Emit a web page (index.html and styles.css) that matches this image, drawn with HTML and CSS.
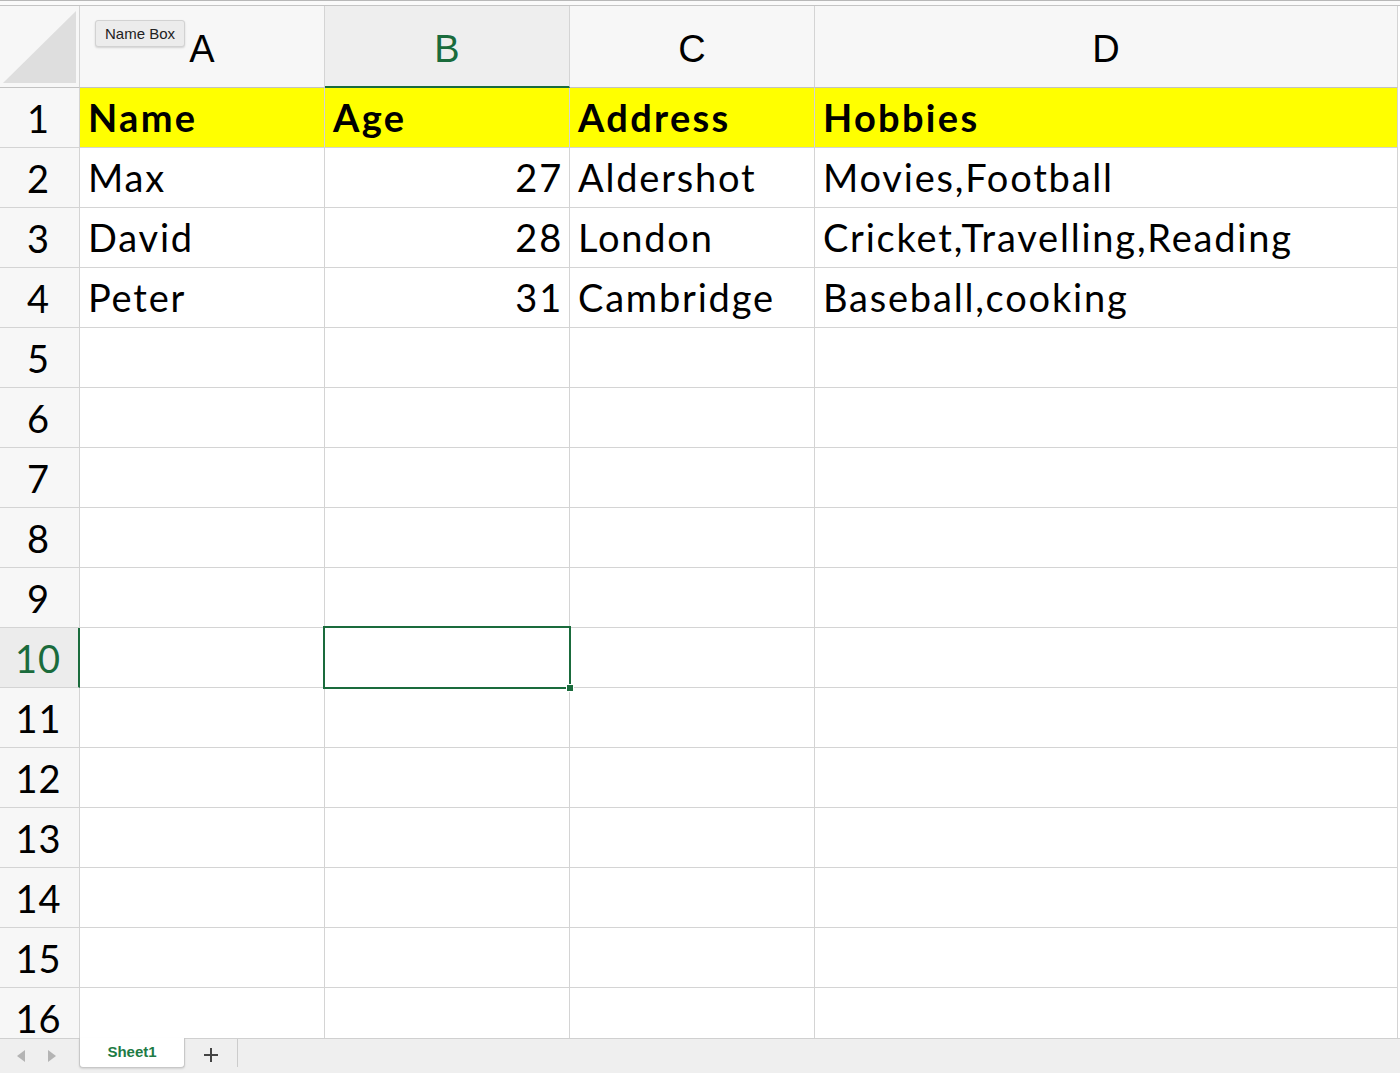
FILE: index.html
```html
<!DOCTYPE html>
<html lang="en">
<head>
  <meta charset="UTF-8">
  <title>Sheet1</title>
  <link rel="stylesheet" href="styles.css">
</head>
<body>

  <div class="topbar"></div>

  <div class="viewport">
    <div class="sheet">
      <div class="corner"><div class="tri"></div></div>
      <div class="colhead">A</div>
      <div class="colhead active">B</div>
      <div class="colhead">C</div>
      <div class="colhead">D</div>

      <div class="rowhead">1</div>
      <div class="cell yellow bold">Name</div>
      <div class="cell yellow bold">Age</div>
      <div class="cell yellow bold">Address</div>
      <div class="cell yellow bold">Hobbies</div>

      <div class="rowhead">2</div>
      <div class="cell">Max</div>
      <div class="cell num">27</div>
      <div class="cell">Aldershot</div>
      <div class="cell">Movies,Football</div>

      <div class="rowhead">3</div>
      <div class="cell">David</div>
      <div class="cell num">28</div>
      <div class="cell">London</div>
      <div class="cell">Cricket,Travelling,Reading</div>

      <div class="rowhead">4</div>
      <div class="cell">Peter</div>
      <div class="cell num">31</div>
      <div class="cell">Cambridge</div>
      <div class="cell">Baseball,cooking</div>

      <div class="rowhead">5</div><div class="cell"></div><div class="cell"></div><div class="cell"></div><div class="cell"></div>
      <div class="rowhead">6</div><div class="cell"></div><div class="cell"></div><div class="cell"></div><div class="cell"></div>
      <div class="rowhead">7</div><div class="cell"></div><div class="cell"></div><div class="cell"></div><div class="cell"></div>
      <div class="rowhead">8</div><div class="cell"></div><div class="cell"></div><div class="cell"></div><div class="cell"></div>
      <div class="rowhead">9</div><div class="cell"></div><div class="cell"></div><div class="cell"></div><div class="cell"></div>
      <div class="rowhead active">10</div><div class="cell"></div><div class="cell selected"><span class="handle"></span></div><div class="cell"></div><div class="cell"></div>
      <div class="rowhead">11</div><div class="cell"></div><div class="cell"></div><div class="cell"></div><div class="cell"></div>
      <div class="rowhead">12</div><div class="cell"></div><div class="cell"></div><div class="cell"></div><div class="cell"></div>
      <div class="rowhead">13</div><div class="cell"></div><div class="cell"></div><div class="cell"></div><div class="cell"></div>
      <div class="rowhead">14</div><div class="cell"></div><div class="cell"></div><div class="cell"></div><div class="cell"></div>
      <div class="rowhead">15</div><div class="cell"></div><div class="cell"></div><div class="cell"></div><div class="cell"></div>
      <div class="rowhead">16</div><div class="cell"></div><div class="cell"></div><div class="cell"></div><div class="cell"></div>
    </div>

    <div class="namebox-tip">Name Box</div>
  </div>

  <div class="tabbar">
    <div class="nav">
      <svg width="12" height="14" viewBox="0 0 12 14"><path d="M10 1 L2 7 L10 13 Z" fill="#b4b4b4"/></svg>
      <svg width="12" height="14" viewBox="0 0 12 14"><path d="M2 1 L10 7 L2 13 Z" fill="#b4b4b4"/></svg>
    </div>
    <div class="tab">Sheet1</div>
    <div class="add-sheet">
      <svg width="16" height="16" viewBox="0 0 16 16"><path d="M8 1 V15 M1 8 H15" stroke="#444" stroke-width="2"/></svg>
    </div>
    <div class="sep"></div>
  </div>

</body>
</html>
```

FILE: styles.css
```css
body {
  margin: 0;
  background-color: #ffffff;
  font-family: Lato, "Liberation Sans", sans-serif;
  overflow: hidden;
}

.topbar {
  height: 4px;
  border-top: 1px solid #b8b8b8;
  border-bottom: 1px solid #c4c4c4;
  background-color: #fafafa;
}

.viewport {
  position: relative;
  height: 1032px;
  overflow: hidden;
}

.sheet {
  display: grid;
  grid-template-columns: 80px 245px 245px 245px 583px;
  grid-template-rows: 82px;
  grid-auto-rows: 60px;
}

.sheet > div {
  box-sizing: border-box;
  border-right: 1px solid #d4d4d4;
  border-bottom: 1px solid #d4d4d4;
}

.corner {
  background-color: #f7f7f7;
  padding: 5px 3px 4px 3px;
  border-bottom-color: #c2c2c2 !important;
}

.tri {
  width: 100%;
  height: 100%;
  background-color: #dedede;
  clip-path: polygon(100% 0, 100% 100%, 0 100%);
}

.colhead {
  background-color: #f7f7f7;
  font-family: "Liberation Sans", sans-serif;
  font-size: 38px;
  color: #000;
  display: flex;
  align-items: center;
  justify-content: center;
  padding-top: 6px;
  border-bottom-color: #c2c2c2 !important;
}

.colhead.active {
  background-color: #eeeeee;
  color: #1a6b3c;
  border-bottom: 2px solid #1a6b3c !important;
  padding-top: 7px;
}

.rowhead {
  background-color: #f7f7f7;
  font-size: 38px;
  letter-spacing: 1px;
  color: #000;
  display: flex;
  align-items: center;
  justify-content: center;
  padding-right: 2px;
}

.rowhead.active {
  background-color: #ececec;
  color: #1a6b3c;
  border-right: 2px solid #1a6b3c !important;
}

.cell {
  font-size: 38px;
  line-height: 59px;
  letter-spacing: 1.8px;
  padding: 0 6px 0 8px;
  white-space: nowrap;
  color: #000;
}

.cell.num {
  text-align: right;
}

.cell.yellow {
  background-color: #ffff00;
}

.cell.bold {
  font-weight: bold;
  letter-spacing: 2.3px;
}

.cell.selected {
  position: relative;
}

.cell.selected::before {
  content: "";
  position: absolute;
  left: -2px;
  top: -2px;
  right: -2px;
  bottom: -2px;
  border: 2px solid #1a6b3c;
}

.handle {
  position: absolute;
  right: -5px;
  bottom: -5px;
  width: 6px;
  height: 6px;
  background-color: #1a6b3c;
  border: 1px solid #ffffff;
}

.namebox-tip {
  position: absolute;
  left: 95px;
  top: 14px;
  padding: 4px 9px;
  font-family: "Liberation Sans", sans-serif;
  font-size: 15px;
  color: #222;
  background-color: #ececec;
  border: 1px solid #d2d2d2;
  border-radius: 3px;
  box-shadow: 0 1px 2px rgba(0, 0, 0, 0.15);
}

.tabbar {
  height: 35px;
  background-color: #efefef;
  border-top: 1px solid #d0d0d0;
  display: flex;
  align-items: flex-start;
  box-sizing: border-box;
}

.nav {
  width: 79px;
  display: flex;
  gap: 19px;
  padding: 10px 0 0 15px;
  box-sizing: border-box;
}

.tab {
  width: 106px;
  height: 30px;
  margin-top: -1px;
  background-color: #ffffff;
  border: 1px solid #c8c8c8;
  border-top: none;
  border-radius: 0 0 4px 4px;
  box-shadow: 0 1px 2px rgba(0, 0, 0, 0.12);
  box-sizing: border-box;
  font-family: "Liberation Sans", sans-serif;
  font-weight: bold;
  font-size: 15px;
  color: #1e7b45;
  text-align: center;
  line-height: 28px;
}

.add-sheet {
  width: 52px;
  display: flex;
  justify-content: center;
  padding-top: 8px;
}

.sep {
  width: 1px;
  height: 28px;
  background-color: #cccccc;
}
```
